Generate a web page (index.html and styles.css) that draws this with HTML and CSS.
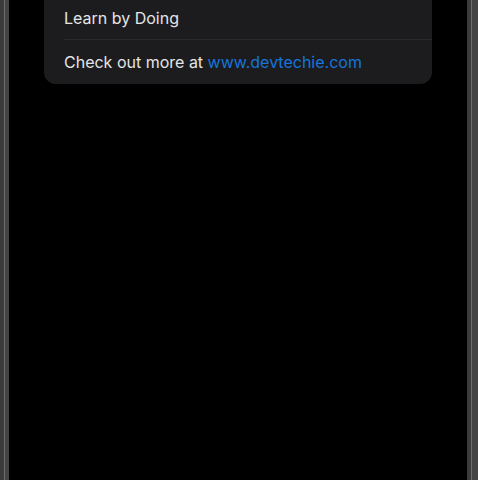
FILE: index.html
```html
<!DOCTYPE html>
<html>
<head>
<meta charset="utf-8">
<link rel="stylesheet" href="styles.css">
</head>
<body>
<div class="frame">
  <div class="bezel bezel-left"></div>
  <main class="screen">
    <div class="card">
      <div class="row row-first">Learn by Doing</div>
      <div class="row row-last">Check out more at&nbsp;<a class="link" href="#">www.devtechie.com</a></div>
    </div>
  </main>
  <div class="bezel bezel-right"></div>
</div>
</body>
</html>
```
FILE: styles.css
```css
html, body {
  margin: 0;
  padding: 0;
  background: #000;
  height: 100%;
}
.frame {
  display: flex;
  height: 480px;
  width: 478px;
  overflow: hidden;
}
.bezel {
  width: 9px;
  flex: none;
}
.bezel-left {
  background: linear-gradient(to right, #3b3b3b 0, #3b3b3b 4px, #6e6e6e 4px, #6e6e6e 5px, #444 5px, #444 9px);
}
.bezel-right {
  width: 11px;
  background: linear-gradient(to right, #3b3b3b 0, #3b3b3b 4px, #6e6e6e 4px, #6e6e6e 5px, #444 5px, #444 11px);
}
.screen {
  flex: 1;
  padding: 0 35px 0 35px;
}
.card {
  background: #1c1c1e;
  border-radius: 0 0 12px 12px;
  padding-left: 20px;
  font-family: Inter, "Liberation Sans", sans-serif;
  font-size: 16px;
  color: #e5e5e7;
}
.row {
  display: flex;
  align-items: center;
}
.row-first {
  height: 40px;
  padding-bottom: 3px;
  border-bottom: 1px solid #29292b;
  box-sizing: border-box;
}
.row-last {
  height: 44px;
}
.link {
  color: #1575dc;
  text-decoration: none;
}
```
